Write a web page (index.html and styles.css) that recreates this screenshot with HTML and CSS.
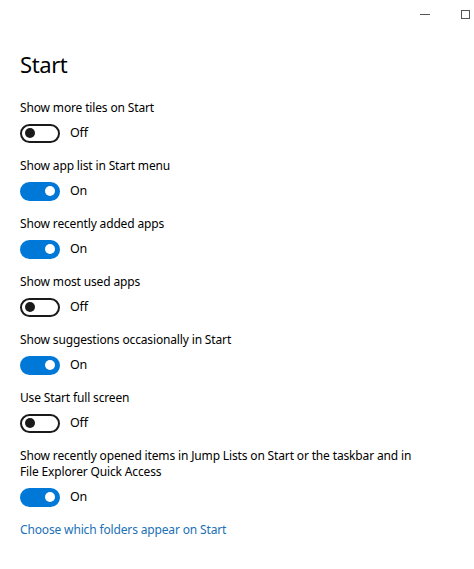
FILE: index.html
```html
<!DOCTYPE html>
<html lang="en">
<head>
<meta charset="utf-8">
<title>Start</title>
<link rel="stylesheet" href="styles.css">
</head>
<body>
<div class="titlebar">
  <span class="ctl ctl-min"></span>
  <span class="ctl ctl-max"></span>
</div>
<main class="page">
  <h1 class="title">Start</h1>

  <div class="setting">
    <div class="label">Show more tiles on Start</div>
    <div class="toggle-row"><span class="toggle"></span><span class="state">Off</span></div>
  </div>
  <div class="setting">
    <div class="label">Show app list in Start menu</div>
    <div class="toggle-row"><span class="toggle on"></span><span class="state">On</span></div>
  </div>
  <div class="setting">
    <div class="label">Show recently added apps</div>
    <div class="toggle-row"><span class="toggle on"></span><span class="state">On</span></div>
  </div>
  <div class="setting">
    <div class="label">Show most used apps</div>
    <div class="toggle-row"><span class="toggle"></span><span class="state">Off</span></div>
  </div>
  <div class="setting">
    <div class="label">Show suggestions occasionally in Start</div>
    <div class="toggle-row"><span class="toggle on"></span><span class="state">On</span></div>
  </div>
  <div class="setting">
    <div class="label">Use Start full screen</div>
    <div class="toggle-row"><span class="toggle"></span><span class="state">Off</span></div>
  </div>
  <div class="setting">
    <div class="label">Show recently opened items in Jump Lists on Start or the taskbar and in File Explorer Quick Access</div>
    <div class="toggle-row"><span class="toggle on"></span><span class="state">On</span></div>
  </div>

  <a class="link" href="#">Choose which folders appear on Start</a>
</main>
</body>
</html>
```

FILE: styles.css
```css
html, body {
  margin: 0;
  padding: 0;
  background: #ffffff;
}
body {
  font-family: "Noto Sans", "Open Sans", sans-serif;
  color: #000000;
  font-size: 12px;
  letter-spacing: -0.15px;
  width: 474px;
  height: 569px;
  overflow: hidden;
}
.titlebar {
  height: 30px;
  display: flex;
  justify-content: flex-end;
  align-items: center;
  gap: 31px;
  padding-right: 4px;
}
.ctl {
  display: block;
}
.ctl-min {
  width: 10px;
  height: 1px;
  background: #555;
  margin-top: -2px;
}
.ctl-max {
  width: 7px;
  height: 7px;
  border: 1px solid #555;
  margin-top: -2px;
}
.page {
  padding: 0 20px;
}
.title {
  margin: 18px 0 20px;
  font-size: 22px;
  letter-spacing: -0.4px;
  font-weight: 400;
  line-height: 32px;
}
.setting {
  margin-bottom: 15px;
}
.label {
  line-height: 16px;
  margin-bottom: 7px;
  max-width: 405px;
}
.toggle-row {
  display: flex;
  align-items: center;
  gap: 10px;
  height: 20px;
}
.toggle {
  position: relative;
  box-sizing: border-box;
  width: 40px;
  height: 19px;
  border: 2px solid #1a1a1a;
  border-radius: 10px;
  flex: none;
}
.toggle::after {
  content: "";
  position: absolute;
  top: 2.5px;
  left: 3px;
  width: 10px;
  height: 10px;
  border-radius: 50%;
  background: #1a1a1a;
}
.toggle.on {
  background: #0078d7;
  border-color: #0078d7;
}
.toggle.on::after {
  left: auto;
  right: 3px;
  background: #ffffff;
}
.state {
  line-height: 20px;
  font-size: 12.5px;
}
.link {
  display: block;
  margin-top: 9px;
  color: #2070b6;
  text-decoration: none;
  line-height: 16px;
}
```
